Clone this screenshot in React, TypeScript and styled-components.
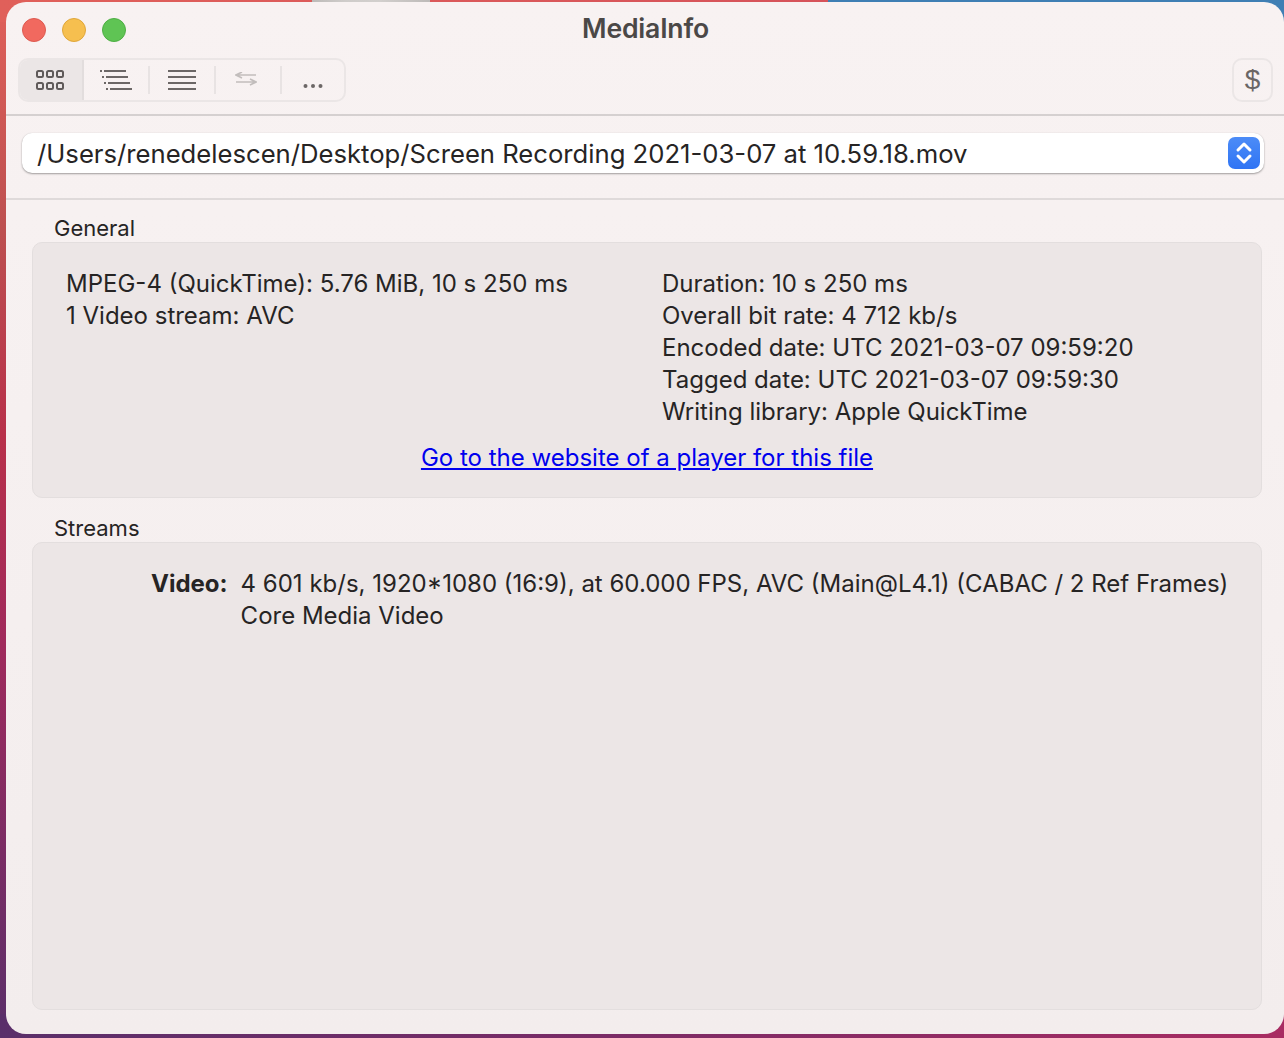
import { createGlobalStyle } from "styled-components";
import styled from "styled-components";

const GlobalStyle = createGlobalStyle`
  html, body {
    margin: 0;
    padding: 0;
    height: 100%;
  }
  body {
    overflow: hidden;
    font-family: "Inter", "Liberation Sans", sans-serif;
  }
`;

const Desktop = styled.div`
  width: 1284px;
  height: 1038px;
  box-sizing: border-box;
  padding: 2px 0 4px 6px;
  background:
    linear-gradient(90deg, transparent 312px, #bdbab8 312px, #cfccca 345px, #d2cfcd 380px, #bdbab8 430px, transparent 430px) top / 100% 2px no-repeat,
    linear-gradient(90deg, #e0605a 0, #d6535a 828px, #3f7fb4 828px) top / 100% 22px no-repeat,
    linear-gradient(90deg, #5a2f6a 0, #7a2b66 600px, #a82c62 100%) bottom / 100% 24px no-repeat,
    linear-gradient(180deg, #e0605a 0%, #bd5050 22%, #b8304a 42%, #a02a5c 62%, #7a2c64 82%, #5a2f6a 100%);
`;

const Window = styled.div`
  height: 100%;
  display: flex;
  flex-direction: column;
  background: linear-gradient(180deg, #f8f2f2, #f3eded);
  border-radius: 20px;
  overflow: hidden;
  color: #262424;
`;

const TitleBar = styled.div`
  height: 114px;
  flex: none;
  box-sizing: border-box;
  padding: 0 11px 0 12px;
  border-bottom: 2px solid #d5d0d0;
  display: grid;
  grid-template-rows: 56px 44px;
`;

const TitleRow = styled.div`
  display: flex;
  align-items: center;
  gap: 16px;
  padding: 0 0 1px 4px;
  position: relative;
`;

const Light = styled.span<{ $fill: string; $edge: string }>`
  width: 24px;
  height: 24px;
  box-sizing: border-box;
  border-radius: 50%;
  background: ${(p) => p.$fill};
  border: 1px solid ${(p) => p.$edge};
`;

const Title = styled.div`
  position: absolute;
  left: 0;
  right: 0;
  top: 10px;
  text-align: center;
  font-size: 26.6px;
  line-height: 32px;
  font-weight: 600;
  letter-spacing: -0.2px;
  color: #4b4847;
`;

const ToolRow = styled.div`
  display: flex;
  justify-content: space-between;
  align-items: flex-start;
`;

const Segments = styled.div`
  display: flex;
  align-items: center;
  width: 328px;
  height: 44px;
  box-sizing: border-box;
  border: 2px solid #ebe6e6;
  border-radius: 10px;
  overflow: hidden;
`;

const Segment = styled.div<{ $w: number; $active?: boolean; $line?: boolean; $nudge?: number }>`
  width: ${(p) => p.$w}px;
  height: ${(p) => (p.$active ? "44px" : "28px")};
  flex: none;
  display: flex;
  align-items: center;
  justify-content: center;
  padding-right: ${(p) => p.$nudge ?? 0}px;
  background: ${(p) => (p.$active ? "#ebe6e6" : "transparent")};
  border-right: 2px solid ${(p) => (p.$active ? "#e2dddd" : p.$line ? "#e8e3e3" : "transparent")};
  box-sizing: border-box;
`;

const DollarButton = styled.div`
  width: 41px;
  height: 44px;
  box-sizing: border-box;
  border: 2px solid #ebe6e6;
  border-radius: 10px;
  display: flex;
  align-items: center;
  justify-content: center;
  font-size: 28px;
  color: #6a6665;
  font-family: "Liberation Sans", sans-serif;
`;

const PathBar = styled.div`
  height: 84px;
  flex: none;
  box-sizing: border-box;
  padding: 17px 20px 0 16px;
  border-bottom: 2px solid #dfdada;
`;

const PathSelect = styled.div`
  height: 40px;
  background: #fff;
  border-radius: 10px;
  box-shadow: 0 1px 2px rgba(0, 0, 0, 0.35), 0 0 1px rgba(0, 0, 0, 0.12);
  display: flex;
  align-items: center;
  justify-content: space-between;
  padding: 0 4px 0 15px;
  font-size: 25.66px;
`;

const Stepper = styled.div`
  width: 32px;
  height: 32px;
  border-radius: 7px;
  background: linear-gradient(180deg, #4c8cf7, #2f74f4);
  display: flex;
  align-items: center;
  justify-content: center;
`;

const Content = styled.div`
  flex: 1;
  display: flex;
  flex-direction: column;
  padding: 15px 22px 24px 26px;
  font-size: 24px;
  line-height: 32px;
`;

const GroupLabel = styled.div`
  font-size: 22px;
  line-height: 26px;
  padding-left: 22px;
  margin-bottom: 1px;
`;

const Box = styled.div<{ $grow?: boolean }>`
  box-sizing: border-box;
  background: #ece6e6;
  border: 1px solid #e3dede;
  border-radius: 10px;
  ${(p) => (p.$grow ? "flex: 1;" : "height: 256px; margin-bottom: 17px;")}
`;

const GeneralGrid = styled.div`
  display: grid;
  grid-template-columns: 596px 1fr;
  padding: 25px 0 0 33px;
`;

const PlayerLink = styled.a`
  display: block;
  text-align: center;
  margin-top: 14px;
  color: #0000ee;
  text-decoration: underline;
`;

const StreamRow = styled.div`
  display: flex;
  padding: 25px 0 0 118px;
`;

const StreamKey = styled.div`
  font-weight: 700;
  margin-right: 13px;
`;

const App = () => {
  return (
    <Desktop>
      <GlobalStyle />
      <Window>
        <TitleBar>
          <TitleRow>
            <Light $fill="#f1695f" $edge="#dd5a50" />
            <Light $fill="#f6bf4f" $edge="#dfa63a" />
            <Light $fill="#5fc454" $edge="#4eae44" />
            <Title>MediaInfo</Title>
          </TitleRow>
          <ToolRow>
            <Segments>
              <Segment $w={64} $active $nudge={2}>
                <svg width="30" height="22" viewBox="0 0 30 22" fill="none" stroke="#5f5a59" strokeWidth="2">
                  <rect x="2" y="2" width="6" height="6" rx="1.5" />
                  <rect x="12" y="2" width="6" height="6" rx="1.5" />
                  <rect x="22" y="2" width="6" height="6" rx="1.5" />
                  <rect x="2" y="14" width="6" height="6" rx="1.5" />
                  <rect x="12" y="14" width="6" height="6" rx="1.5" />
                  <rect x="22" y="14" width="6" height="6" rx="1.5" />
                </svg>
              </Segment>
              <Segment $w={66} $line>
                <svg width="32" height="22" viewBox="0 0 32 22" stroke="#6c6766" strokeWidth="2">
                  <path d="M0 2h2M4 2h22M2 8h2M6 8h22M4 14h2M8 14h22M6 20h2M10 20h22" />
                </svg>
              </Segment>
              <Segment $w={66} $line>
                <svg width="28" height="20" viewBox="0 0 28 20" stroke="#6c6766" strokeWidth="2">
                  <path d="M0 1h28M0 7h28M0 13h28M0 19h28" />
                </svg>
              </Segment>
              <Segment $w={66} $line $nudge={4}>
                <svg width="22" height="16" viewBox="0 0 22 16" fill="none" stroke="#c2bdbc" strokeWidth="1.6">
                  <path d="M1 3h20M7 0 1 3l6 3M1 10h20M15 7l6 3-6 3" />
                </svg>
              </Segment>
              <Segment $w={62}>
                <svg width="20" height="6" viewBox="0 0 20 6" fill="#6c6766" style={{ marginTop: 12, marginLeft: 2 }}>
                  <circle cx="2.5" cy="3" r="2" />
                  <circle cx="10" cy="3" r="2" />
                  <circle cx="17.5" cy="3" r="2" />
                </svg>
              </Segment>
            </Segments>
            <DollarButton>$</DollarButton>
          </ToolRow>
        </TitleBar>
        <PathBar>
          <PathSelect>
            /Users/renedelescen/Desktop/Screen Recording 2021-03-07 at 10.59.18.mov
            <Stepper>
              <svg width="18" height="26" viewBox="0 0 18 26" fill="none" stroke="#fff" strokeWidth="3" strokeLinecap="round" strokeLinejoin="round">
                <path d="M3 10 9 4l6 6M3 16l6 6 6-6" />
              </svg>
            </Stepper>
          </PathSelect>
        </PathBar>
        <Content>
          <GroupLabel>General</GroupLabel>
          <Box>
            <GeneralGrid>
              <div>
                MPEG-4 (QuickTime): 5.76 MiB, 10 s 250 ms
                <br />1 Video stream: AVC
              </div>
              <div>
                Duration: 10 s 250 ms
                <br />
                Overall bit rate: 4 712 kb/s
                <br />
                Encoded date: UTC 2021-03-07 09:59:20
                <br />
                Tagged date: UTC 2021-03-07 09:59:30
                <br />
                Writing library: Apple QuickTime
              </div>
            </GeneralGrid>
            <PlayerLink>Go to the website of a player for this file</PlayerLink>
          </Box>
          <GroupLabel>Streams</GroupLabel>
          <Box $grow>
            <StreamRow>
              <StreamKey>Video:</StreamKey>
              <div>
                4 601 kb/s, 1920*1080 (16:9), at 60.000 FPS, AVC (Main@L4.1) (CABAC / 2 Ref Frames)
                <br />
                Core Media Video
              </div>
            </StreamRow>
          </Box>
        </Content>
      </Window>
    </Desktop>
  );
};

export default App;
